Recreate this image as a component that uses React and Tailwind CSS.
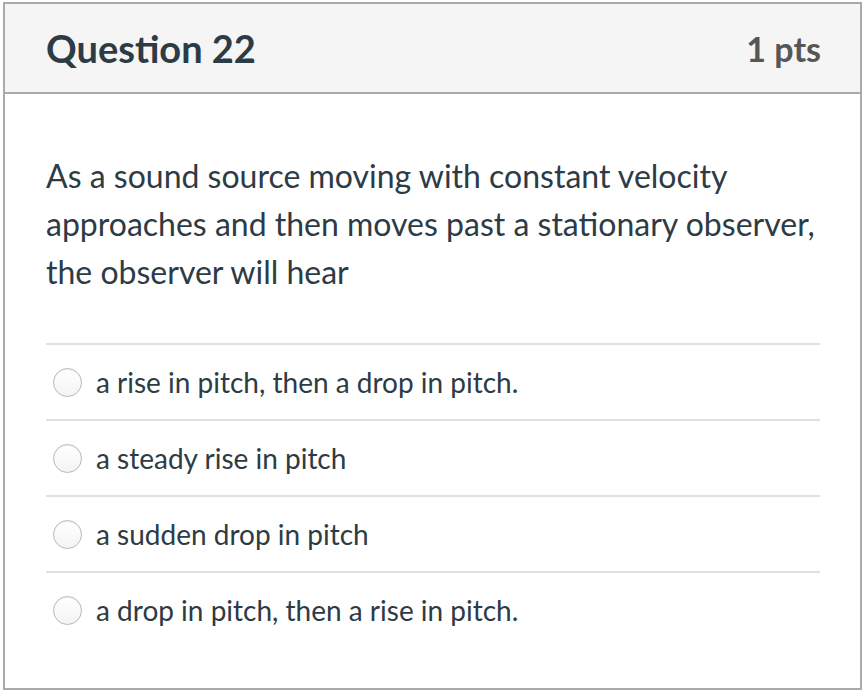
export default function App() {
  const respuestas = [
    'a rise in pitch, then a drop in pitch.',
    'a steady rise in pitch',
    'a sudden drop in pitch',
    'a drop in pitch, then a rise in pitch.',
  ]

  return (
    <div
      className="w-[866px] h-[694px] bg-white pl-[3px] pt-[2px]"
      style={{ fontFamily: 'Lato, "Open Sans", sans-serif' }}
    >
      <div className="w-[859px] h-[688px] border-2 border-[#aaaaaa] flex flex-col">
        <div className="h-[90px] bg-[#f5f5f5] border-b-2 border-[#aaaaaa] flex items-center justify-between pl-[41px] pr-[39px]">
          <h2 className="text-[38px] font-bold text-[#2d3b45]">Question 22</h2>
          <div className="text-[34px] font-bold text-[#565656]">1 pts</div>
        </div>

        <div className="pt-[58px] px-[41px]">
          <p className="text-[32px] leading-[48px] text-[#2d3b45]">
            As a sound source moving with constant velocity approaches and then moves past a
            stationary observer, the observer will hear
          </p>

          <div className="mt-[47px] w-[774px]">
            {respuestas.map((texto) => (
              <div
                key={texto}
                className="h-[76px] border-t-2 border-[#e0e0e0] flex items-center"
              >
                <div className="ml-[7px] w-[29px] h-[29px] rounded-full border border-[#b8b8b8] bg-gradient-to-b from-white to-[#f4f4f4] shadow-[inset_0_1px_1px_rgba(0,0,0,0.06)]" />
                <span className="ml-[14px] text-[28px] text-[#2d3b45]">{texto}</span>
              </div>
            ))}
          </div>
        </div>
      </div>
    </div>
  )
}
